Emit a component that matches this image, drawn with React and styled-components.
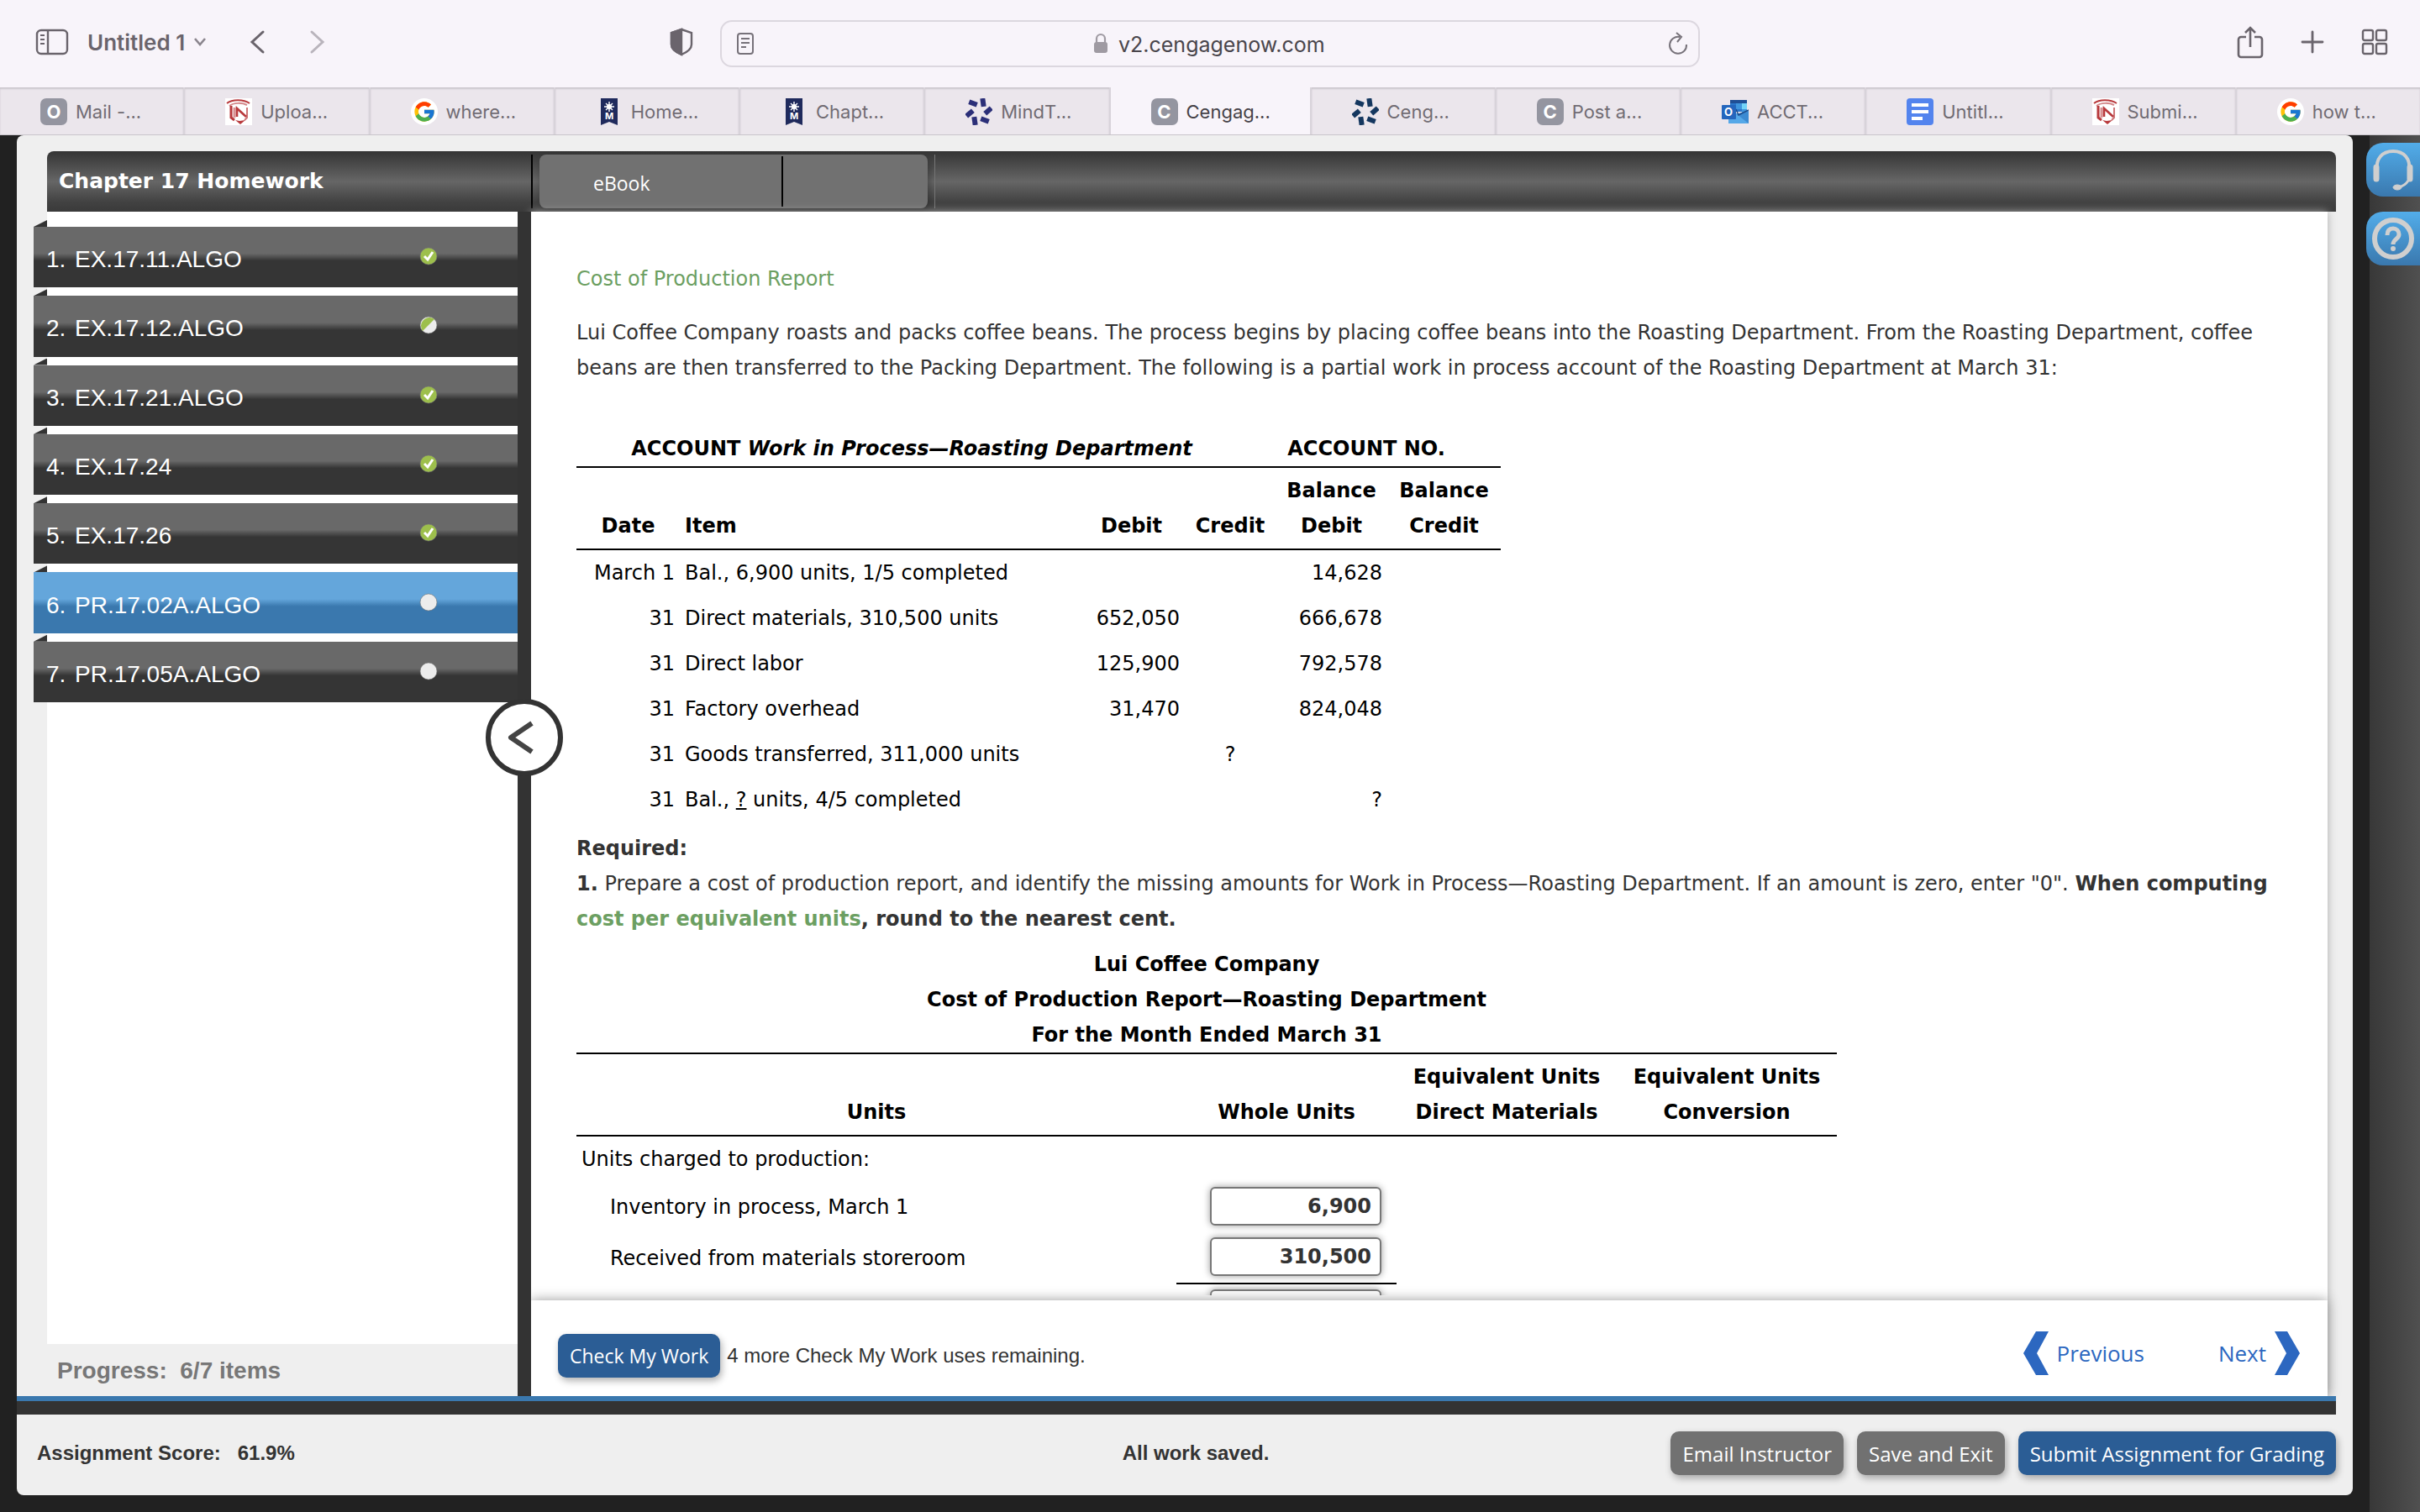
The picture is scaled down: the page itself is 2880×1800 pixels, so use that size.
import React, { useState } from "react";
import styled, { createGlobalStyle } from "styled-components";
import { FcGoogle } from "react-icons/fc";

const verdana = `Verdana, "DejaVu Sans", sans-serif`;
const arial = `Arial, "Liberation Sans", sans-serif`;
const openSans = `"Open Sans", sans-serif`;
const system = `Inter, sans-serif`;

const browserTabs = [
  { icon: "O", text: "Mail -..." },
  { icon: "shield", text: "Uploa..." },
  { icon: "google", text: "where..." },
  { icon: "ribbon", text: "Home..." },
  { icon: "ribbon", text: "Chapt..." },
  { icon: "burst", text: "MindT..." },
  { icon: "C", text: "Cengag...", active: true },
  { icon: "burstTeal", text: "Ceng..." },
  { icon: "C", text: "Post a..." },
  { icon: "outlook", text: "ACCT..." },
  { icon: "docs", text: "Untitl..." },
  { icon: "shield", text: "Submi..." },
  { icon: "google", text: "how t..." },
];

const assignments = [
  { name: "EX.17.11.ALGO", status: "done" },
  { name: "EX.17.12.ALGO", status: "half" },
  { name: "EX.17.21.ALGO", status: "done" },
  { name: "EX.17.24", status: "done" },
  { name: "EX.17.26", status: "done" },
  { name: "PR.17.02A.ALGO", status: "empty" },
  { name: "PR.17.05A.ALGO", status: "empty" },
];

const ledger = [
  { date: "March 1", item: "Bal., 6,900 units, 1/5 completed", balance: "14,628" },
  { date: "31", item: "Direct materials, 310,500 units", debit: "652,050", balance: "666,678" },
  { date: "31", item: "Direct labor", debit: "125,900", balance: "792,578" },
  { date: "31", item: "Factory overhead", debit: "31,470", balance: "824,048" },
  { date: "31", item: "Goods transferred, 311,000 units", credit: "?" },
  { date: "31", item: <>Bal., <u>?</u> units, 4/5 completed</>, balance: "?" },
];

// Six-bladed starburst, each blade is centre x, centre y, width, height, angle
const blades = [
  [21, 5, 6, 10, -8],
  [27, 15, 6, 10, 48],
  [23, 26, 10, 6, 20],
  [11, 27, 6, 10, -8],
  [5, 18, 6, 10, 50],
  [9, 6, 10, 6, 20],
];

function TabIcon({ kind }) {
  if (kind === "O" || kind === "C") return <LetterBadge>{kind}</LetterBadge>;
  if (kind === "google")
    return (
      <GoogleBadge>
        <FcGoogle size={28} />
      </GoogleBadge>
    );
  if (kind === "shield")
    return (
      <svg width="32" height="32" viewBox="0 0 32 32">
        <rect width="32" height="32" fill="#fff" />
        <g fill="none" stroke="#b8393c">
          <path d="M2 6C8 1 22 1 29 6" strokeWidth="2" />
          <path d="M5 9C10 5 20 5 26 8" strokeWidth="2" opacity=".6" />
          <path d="M7 9V23l4 3" strokeWidth="3" />
          <path d="M26 11v12l-3 3" strokeWidth="2" opacity=".7" />
          <path d="M11 11v12" strokeWidth="3" opacity=".55" />
          <path d="M14 22V12l11 10" strokeWidth="2.6" />
        </g>
        <path d="M12 26l5 1 7-1-6 5z" fill="#b8393c" />
      </svg>
    );
  if (kind === "ribbon")
    return (
      <svg width="32" height="32" viewBox="0 0 32 32">
        <path d="M6 0h20v32l-10-4-10 4z" fill="#1f2a5c" />
        <path
          d="M16 4v12M10 10h12M12 6l8 8M20 6l-8 8"
          stroke="#fff"
          strokeWidth="1.4"
        />
        <circle cx="16" cy="10" r="3" fill="#fff" />
        <text x="16" y="25" textAnchor="middle" fontSize="11" fontWeight="700" fontFamily="Inter" fill="#fff">
          M
        </text>
      </svg>
    );
  if (kind === "outlook")
    return (
      <svg width="32" height="32" viewBox="0 0 32 32">
        <path d="M10 2h20v14H10z" fill="#2a76cc" />
        <path d="M10 2h20v4H10z" fill="#1f4f96" />
        <path d="M17 6h7v7h-7z" fill="#3f95dd" />
        <path d="M24 6h6v7h-6z" fill="#73d3f8" />
        <path d="M24 13h6v5h-6z" fill="#3f95dd" />
        <path d="M8 18h12l12-3v15H8z" fill="#55a8e8" />
        <path d="M18 19l14 11V14z" fill="#3b8ad2" />
        <path d="M17 13l3 7 12-6" fill="none" stroke="#1c4a8a" strokeWidth="1.4" />
        <rect y="8" width="17" height="17" rx="1" fill="#2466bd" />
        <text x="8" y="21" textAnchor="middle" fontSize="13" fontWeight="700" fontFamily="Inter" fill="#fff">
          O
        </text>
      </svg>
    );
  if (kind === "docs")
    return (
      <svg width="32" height="32" viewBox="0 0 32 32">
        <rect width="32" height="32" rx="4" fill="#5384ee" />
        <path d="M6 8h20M6 16h20M6 24h13" stroke="#fff" strokeWidth="4" />
      </svg>
    );
  return (
    <svg width="32" height="32" viewBox="0 0 32 32" fill={kind === "burst" ? "#2b2f78" : "#14375f"}>
      {blades.map(([x, y, w, h, a]) => (
        <rect key={a + "-" + x} x={x - w / 2} y={y - h / 2} width={w} height={h} transform={`rotate(${a} ${x} ${y})`} />
      ))}
    </svg>
  );
}

function StatusDot({ status }) {
  return (
    <svg width="22" height="22" viewBox="0 0 22 22">
      <circle cx="11" cy="11" r="10" fill={status === "done" ? "#9dbf4c" : "#ececec"} stroke="#777" strokeOpacity=".6" />
      {status === "half" && <path d="M4 18A10 10 0 0 1 18 4z" fill="#9dbf4c" />}
      {status === "done" && <path d="M6 11l4 4 6-9" fill="none" stroke="#fff" strokeWidth="3" />}
    </svg>
  );
}

function BrowserChrome() {
  return (
    <header>
      <Toolbar>
        <ToolbarGroup>
          <IconButton aria-label="Show sidebar">
            <svg width="40" height="32" viewBox="0 0 40 32" fill="none" stroke="#6a646c" strokeWidth="2.4">
              <rect x="2" y="2" width="36" height="28" rx="5" />
              <path d="M15 2v28" />
              <path d="M6 8h5M6 13h5M6 18h5" strokeWidth="2" />
            </svg>
          </IconButton>
          <GroupButton>
            Untitled 1
            <svg width="16" height="12" viewBox="0 0 16 12" fill="none" stroke="#8a858d" strokeWidth="2.6">
              <path d="M2 2l6 7 6-7" />
            </svg>
          </GroupButton>
          <ArrowButtons>
            <IconButton aria-label="Back">
              <svg width="20" height="32" viewBox="0 0 20 32" fill="none" stroke="#6a646c" strokeWidth="3" strokeLinecap="round">
                <path d="M17 4L4 16l13 12" />
              </svg>
            </IconButton>
            <IconButton aria-label="Forward">
              <svg width="20" height="32" viewBox="0 0 20 32" fill="none" stroke="#b9b4bc" strokeWidth="3" strokeLinecap="round">
                <path d="M3 4l13 12L3 28" />
              </svg>
            </IconButton>
          </ArrowButtons>
          <ShieldButton aria-label="Privacy report">
            <svg width="28" height="34" viewBox="0 0 28 34" fill="none" stroke="#6a646c" strokeWidth="2.4">
              <path d="M14 2l12 4v14c0 5-5 9-12 12C7 29 2 25 2 20V6z" />
              <path d="M14 2v30C7 29 2 25 2 20V6z" fill="#6a646c" />
            </svg>
          </ShieldButton>
        </ToolbarGroup>
        <AddressBar>
          <svg width="20" height="28" viewBox="0 0 20 28" fill="none" stroke="#77727a" strokeWidth="2">
            <rect x="1" y="2" width="18" height="24" rx="3" />
            <path d="M5 8h10M5 13h10M5 18h6" />
          </svg>
          <AddressLabel>
            <svg width="18" height="26" viewBox="0 0 18 26">
              <rect x="1" y="11" width="16" height="13" rx="3" fill="#9f9aa2" />
              <path d="M4 12V7a5 5 0 0 1 10 0v5" fill="none" stroke="#9f9aa2" strokeWidth="2.2" />
            </svg>
            <AddressInput aria-label="Address" defaultValue="v2.cengagenow.com" />
          </AddressLabel>
          <IconButton aria-label="Reload">
            <svg width="24" height="28" viewBox="0 0 24 28" fill="none" stroke="#77727a" strokeWidth="2">
              <path d="M14 6a10 10 0 1 0 8 9" />
              <path d="M10 1l6 5-5 6" />
            </svg>
          </IconButton>
        </AddressBar>
        <ToolbarActions>
          <IconButton aria-label="Share">
            <svg width="32" height="40" viewBox="0 0 32 40" fill="none" stroke="#6a646c" strokeWidth="2.6">
              <path d="M11 14H5a3 3 0 0 0-3 3v18a3 3 0 0 0 3 3h22a3 3 0 0 0 3-3V17a3 3 0 0 0-3-3h-6" />
              <path d="M16 26V4M10 9l6-6 6 6" />
            </svg>
          </IconButton>
          <IconButton aria-label="New tab">
            <svg width="28" height="28" viewBox="0 0 28 28" stroke="#6a646c" strokeWidth="2.8" strokeLinecap="round">
              <path d="M14 2v24M2 14h24" />
            </svg>
          </IconButton>
          <IconButton aria-label="Tab overview">
            <svg width="32" height="32" viewBox="0 0 32 32" fill="none" stroke="#6a646c" strokeWidth="2.4">
              <rect x="2" y="2" width="12" height="12" rx="2" />
              <rect x="18" y="2" width="12" height="12" rx="2" />
              <rect x="2" y="18" width="12" height="12" rx="2" />
              <rect x="18" y="18" width="12" height="12" rx="2" />
            </svg>
          </IconButton>
        </ToolbarActions>
      </Toolbar>
      <TabStrip>
        {browserTabs.map((tab, i) => (
          <BrowserTab key={i} $active={tab.active}>
            <TabIcon kind={tab.icon} />
            {tab.text}
          </BrowserTab>
        ))}
      </TabStrip>
    </header>
  );
}

function Sidebar({ current, onSelect }) {
  return (
    <SidebarBox>
      <AssignmentList>
        {assignments.map((a, i) => (
          <AssignmentLink key={a.name} href="#" $active={i === current} onClick={() => onSelect(i)}>
            <Number>{i + 1}.</Number>
            <Name>{a.name}</Name>
            <StatusDot status={a.status} />
          </AssignmentLink>
        ))}
      </AssignmentList>
      <Progress>Progress:&nbsp; 6/7 items</Progress>
    </SidebarBox>
  );
}

function LedgerTable() {
  return (
    <LedgerGrid>
      <colgroup>
        <col width="123" />
        <col width="474" />
        <col width="127" />
        <col width="108" />
        <col width="133" />
        <col width="135" />
      </colgroup>
      <thead>
        <tr>
          <AccountHead colSpan="4" $trail="34px">
            ACCOUNT <i>Work in Process—Roasting Department</i>
          </AccountHead>
          <AccountHead colSpan="2" $trail="52px">ACCOUNT NO.</AccountHead>
        </tr>
        <tr>
          <Head>Date</Head>
          <Head $align="left">Item</Head>
          <Head>Debit</Head>
          <Head>Credit</Head>
          <Head>Balance<br />Debit</Head>
          <Head>Balance<br />Credit</Head>
        </tr>
      </thead>
      <tbody>
        {ledger.map((row, i) => (
          <tr key={i}>
            <Cell $align="right">{row.date}</Cell>
            <Cell>{row.item}</Cell>
            <Cell $align="right">{row.debit}</Cell>
            <Cell $align="center">{row.credit}</Cell>
            <Cell $align="right">{row.balance}</Cell>
            <Cell />
          </tr>
        ))}
      </tbody>
    </LedgerGrid>
  );
}

function ReportTable() {
  return (
    <ReportGrid>
      <caption>
        Lui Coffee Company
        <br />
        Cost of Production Report—Roasting Department
        <br />
        For the Month Ended March 31
      </caption>
      <colgroup>
        <col width="714" />
        <col width="262" />
        <col width="262" />
        <col width="262" />
      </colgroup>
      <thead>
        <tr>
          <Head $topLine>Units</Head>
          <Head $topLine>Whole Units</Head>
          <Head $topLine>Equivalent Units<br />Direct Materials</Head>
          <Head $topLine>Equivalent Units<br />Conversion</Head>
        </tr>
      </thead>
      <tbody>
        <tr>
          <Cell>Units charged to production:</Cell>
        </tr>
        <tr>
          <Cell $indent>
            <label htmlFor="inventory">Inventory in process, March 1</label>
          </Cell>
          <AmountCell>
            <AmountInput id="inventory" defaultValue="6,900" />
          </AmountCell>
        </tr>
        <tr>
          <Cell $indent>
            <label htmlFor="received">Received from materials storeroom</label>
          </Cell>
          <AmountCell $underline>
            <AmountInput id="received" defaultValue="310,500" />
          </AmountCell>
        </tr>
        <tr>
          <Cell $indent />
          <AmountCell>
            <AmountInput aria-label="Total units charged to production" />
          </AmountCell>
        </tr>
      </tbody>
    </ReportGrid>
  );
}

export default function App() {
  const [current, setCurrent] = useState(5);

  return (
    <>
      <GlobalStyle />
      <Shell>
        <BrowserChrome />
        <Page>
          <Panel>
            <TitleBar>
              <Title>Chapter 17 Homework</Title>
              <TitleTools>
                <ToolTabs>
                  <EBookButton>eBook</EBookButton>
                  <ToolSpacer />
                </ToolTabs>
              </TitleTools>
            </TitleBar>
            <Workspace>
              <Sidebar current={current} onSelect={setCurrent} />
              <Splitter>
                <CollapseButton aria-label="Collapse list">
                  <svg width="32" height="40" viewBox="0 0 32 40" fill="none" stroke="#444" strokeWidth="6">
                    <path d="M30 3L5 20l25 17" strokeLinejoin="round" />
                  </svg>
                </CollapseButton>
              </Splitter>
              <Content>
                <Question>
                  <TopicLink href="#">Cost of Production Report</TopicLink>
                  <Intro>
                    Lui Coffee Company roasts and packs coffee beans. The process begins by placing coffee beans into
                    the Roasting Department. From the Roasting Department, coffee beans are then transferred to the
                    Packing Department. The following is a partial work in process account of the Roasting Department
                    at March 31:
                  </Intro>
                  <LedgerTable />
                  <Required>
                    <b>Required:</b>
                    <br />
                    <b>1.</b> Prepare a cost of production report, and identify the missing amounts for Work in
                    Process—Roasting Department. If an amount is zero, enter "0".{" "}
                    <b>
                      When computing <a href="#">cost per equivalent units</a>, round to the nearest cent.
                    </b>
                  </Required>
                  <ReportTable />
                </Question>
                <ContentFooter>
                  <CheckGroup>
                    <CheckButton $primary>Check My Work</CheckButton>
                    <span>4 more Check My Work uses remaining.</span>
                  </CheckGroup>
                  <PagerNav>
                    <PagerLink href="#">
                      <svg width="30" height="52" viewBox="0 0 30 52" fill="#2c67c0">
                        <path d="M15 0h15L16 26l14 26H15L0 26z" />
                      </svg>
                      Previous
                    </PagerLink>
                    <PagerLink href="#">
                      Next
                      <svg width="30" height="52" viewBox="0 0 30 52" fill="#2c67c0">
                        <path d="M15 0H0l14 26L0 52h15l15-26z" />
                      </svg>
                    </PagerLink>
                  </PagerNav>
                </ContentFooter>
              </Content>
            </Workspace>
            <Baseline />
            <StatusBar>
              <span>Assignment Score:&nbsp;&nbsp; 61.9%</span>
              <SaveState>All work saved.</SaveState>
              <StatusActions>
                <ActionButton>Email Instructor</ActionButton>
                <ActionButton>Save and Exit</ActionButton>
                <ActionButton $primary>Submit Assignment for Grading</ActionButton>
              </StatusActions>
            </StatusBar>
          </Panel>
          <HelpRail>
            <HelpButton aria-label="Support">
              <svg width="50" height="50" viewBox="0 0 50 50" fill="none" stroke="#cfcfcf">
                <path d="M6 26C4 12 12 3 25 3s21 9 19 23" strokeWidth="4" />
                <path d="M5 22v14M45 22v14" strokeWidth="7" strokeLinecap="round" />
                <path d="M43 38c-3 5-7 7-12 8" strokeWidth="3" />
                <ellipse cx="30" cy="46" rx="5" ry="3" fill="#cfcfcf" />
              </svg>
            </HelpButton>
            <HelpButton aria-label="Help">
              <svg width="52" height="52" viewBox="0 0 52 52" fill="none" stroke="#cfcfcf">
                <circle cx="26" cy="26" r="22" strokeWidth="6" />
                <path d="M19 22c0-6 3-8 7-8s7 3 7 7c0 6-7 5-7 12" strokeWidth="5" />
                <circle cx="26" cy="38" r="3" fill="#cfcfcf" stroke="none" />
              </svg>
            </HelpButton>
          </HelpRail>
        </Page>
      </Shell>
    </>
  );
}

const GlobalStyle = createGlobalStyle`
  * {
    box-sizing: border-box;
  }
  body {
    margin: 0;
    background: #212121;
    font-family: ${arial};
  }
  button, input {
    font: inherit;
    margin: 0;
  }
  svg {
    display: block;
    flex: none;
  }
`;

const Shell = styled.div`
  display: flex;
  flex-direction: column;
  height: 100vh;
`;

// ---- browser chrome
const Toolbar = styled.div`
  display: grid;
  grid-template-columns: 1fr minmax(400px, 1166px) 1fr;
  align-items: center;
  height: 104px;
  background: #f8f4fa;
`;

const ToolbarGroup = styled.div`
  display: flex;
  align-items: center;
  padding: 0 32px 4px 42px;
`;

const IconButton = styled.button`
  display: flex;
  padding: 0;
  border: 0;
  background: none;
`;

const GroupButton = styled(IconButton)`
  align-items: center;
  gap: 10px;
  margin-left: 22px;
  font-family: ${system};
  font-size: 26px;
  font-weight: 600;
  color: #6a646c;
`;

const ArrowButtons = styled.div`
  display: flex;
  gap: 52px;
  margin-left: 50px;
`;

const ShieldButton = styled(IconButton)`
  margin-left: auto;
`;

const AddressBar = styled.div`
  display: flex;
  align-items: center;
  justify-content: space-between;
  height: 56px;
  padding: 0 12px 0 18px;
  border: 2px solid #dcd7df;
  border-radius: 14px;
`;

const AddressLabel = styled.label`
  display: flex;
  align-items: center;
  gap: 12px;
`;

const AddressInput = styled.input`
  width: 250px;
  padding: 2px 0 0;
  border: 0;
  outline: 0;
  background: none;
  font-family: ${system};
  font-size: 25px;
  color: #4a464c;
`;

const ToolbarActions = styled.div`
  display: flex;
  align-items: center;
  justify-content: flex-end;
  gap: 44px;
  padding: 0 38px 4px 0;
`;

const TabStrip = styled.nav`
  display: flex;
  height: 57px;
  border-bottom: 1px solid #c9c5cb;
`;

const BrowserTab = styled.button`
  display: flex;
  align-items: center;
  gap: 10px;
  flex: ${(p) => (p.$active ? "0 0 239px" : "1 1 0")};
  min-width: 0;
  padding: 2px 0 0 48px;
  border: 0;
  border-right: 2px solid #d8d3da;
  background: ${(p) => (p.$active ? "#f8f4fa" : "#ebe6ec")};
  box-shadow: ${(p) => (p.$active ? "none" : "inset 0 2px 2px #cbc6cd")};
  font-family: ${system};
  font-size: 22px;
  white-space: nowrap;
  color: ${(p) => (p.$active ? "#454147" : "#716c73")};
  &:last-child {
    border-right: 0;
  }
`;

const LetterBadge = styled.span`
  display: flex;
  align-items: center;
  justify-content: center;
  width: 32px;
  height: 32px;
  border-radius: 7px;
  background: #9495a0;
  font-size: 22px;
  font-weight: 700;
  color: #fff;
`;

const GoogleBadge = styled.span`
  display: flex;
  align-items: center;
  justify-content: center;
  width: 32px;
  height: 32px;
  border-radius: 50%;
  background: #fff;
`;

// ---- page frame
const Page = styled.main`
  display: flex;
  flex: 1;
  min-height: 0;
  padding-left: 20px;
  background: linear-gradient(to left, #505050, #383838 60px, #212121 60px);
`;

const Panel = styled.div`
  display: flex;
  flex-direction: column;
  flex: 1;
  min-width: 0;
  margin-bottom: 20px;
  padding-top: 19px;
  border-radius: 8px;
  background: #efefef;
`;

const TitleBar = styled.div`
  display: flex;
  flex: none;
  height: 72px;
  margin: 0 20px 0 36px;
  border-radius: 8px 8px 0 0;
  background: linear-gradient(#343434, #666 50%, #424242 84%, #3a3a3a);
`;

const Title = styled.h1`
  width: 576px;
  margin: 0;
  padding-left: 14px;
  font: bold 25px/72px ${verdana};
  color: #fff;
`;

const TitleTools = styled.div`
  display: flex;
  align-self: center;
  height: 64px;
  padding: 0 8px;
  border-left: 2px solid #000;
  border-right: 1px solid #777;
`;

const ToolTabs = styled.div`
  display: flex;
  align-items: center;
  border-radius: 8px;
  background: #717171;
  box-shadow: 2px 6px 10px rgba(0, 0, 0, 0.3);
`;

const EBookButton = styled.button`
  width: 290px;
  height: 60px;
  padding: 4px 0 0 64px;
  border: 0;
  border-right: 2px solid #000;
  background: none;
  font-family: ${openSans};
  font-size: 23px;
  text-align: left;
  color: #fff;
`;

const ToolSpacer = styled.div`
  width: 172px;
`;

const Workspace = styled.div`
  display: flex;
  flex: 1;
  min-height: 0;
  margin: 0 30px 0 20px;
`;

// ---- assignment list
const SidebarBox = styled.aside`
  display: flex;
  flex-direction: column;
  flex: none;
  width: 576px;
  background: linear-gradient(to right, #efefef 16px, #fff 16px);
`;

const AssignmentList = styled.nav`
  display: grid;
  grid-auto-rows: 1fr;
  gap: 10px;
  height: 566px;
  margin-top: 18px;
`;

const AssignmentLink = styled.a`
  position: relative;
  display: flex;
  align-items: center;
  padding: 0 95px 0 15px;
  background: ${(p) =>
    p.$active
      ? "linear-gradient(#64a6db 44%, #3a78ae 56%)"
      : "linear-gradient(#696969 44%, #353535 56%)"};
  font-size: 28px;
  color: #fff;
  text-decoration: none;
  svg {
    margin-bottom: 2px;
  }
  &::before {
    content: "";
    position: absolute;
    left: 0;
    bottom: 100%;
    width: 16px;
    height: 8px;
    background: #333;
    clip-path: polygon(0 100%, 100% 0, 100% 100%);
  }
`;

const Number = styled.span`
  width: 34px;
  padding-top: 6px;
`;

const Name = styled.span`
  flex: 1;
  padding-top: 6px;
`;

const Progress = styled.div`
  margin-top: auto;
  padding: 2px 28px 0;
  background: linear-gradient(#efefef, #efefef);
  font-size: 28px;
  font-weight: 700;
  line-height: 60px;
  color: #777;
`;

const Splitter = styled.div`
  position: relative;
  flex: none;
  width: 16px;
  background: #333;
`;

const CollapseButton = styled.button`
  position: absolute;
  z-index: 2;
  top: 580px;
  left: 50%;
  display: flex;
  align-items: center;
  justify-content: center;
  width: 92px;
  height: 92px;
  margin-left: -46px;
  padding: 0 10px 0 0;
  border: 6px solid #333;
  border-radius: 50%;
  background: #fff;
`;

// ---- question
const Content = styled.section`
  display: flex;
  flex-direction: column;
  flex: 1;
  min-width: 0;
  background: #fff;
  box-shadow: 0 0 10px #aaa;
`;

const Question = styled.div`
  flex: 1;
  min-height: 0;
  margin-bottom: 6px;
  padding: 59px 40px 0 54px;
  overflow: hidden;
  font-family: ${verdana};
  font-size: 24px;
  line-height: 42px;
  color: #333;
`;

const TopicLink = styled.a`
  display: block;
  color: #6c9f62;
  text-decoration: none;
`;

const Intro = styled.p`
  margin: 22px 0 54px;
`;

const Required = styled.p`
  margin: 10px 0 12px;
  a {
    color: #6c9f62;
    text-decoration: none;
  }
`;

const LedgerGrid = styled.table`
  width: 1100px;
  table-layout: fixed;
  border-spacing: 0;
  color: #000;
`;

const ReportGrid = styled(LedgerGrid)`
  width: 1500px;
  caption {
    font-weight: 700;
  }
`;

const AccountHead = styled.th`
  padding: 0 ${(p) => p.$trail} 0 0;
  border-bottom: 2px solid #000;
`;

const Head = styled.th`
  padding: 6px;
  border-top: ${(p) => (p.$topLine ? "2px solid #000" : "0")};
  border-bottom: 2px solid #000;
  text-align: ${(p) => p.$align || "center"};
  vertical-align: bottom;
`;

const Cell = styled.td`
  padding: 6px 6px 6px ${(p) => (p.$indent ? "40px" : "6px")};
  text-align: ${(p) => p.$align || "left"};
`;

const AmountCell = styled.td`
  padding: 6px 18px 8px 0;
  border-bottom: ${(p) => (p.$underline ? "2px solid #000" : "0")};
`;

const AmountInput = styled.input`
  display: block;
  width: 204px;
  height: 46px;
  margin-left: auto;
  padding: 0 10px;
  border: 2px solid #777;
  border-radius: 6px;
  box-shadow: 0 0 8px rgba(0, 0, 0, 0.4);
  font-weight: 700;
  text-align: right;
  color: #333;
`;

const ContentFooter = styled.footer`
  display: flex;
  align-items: center;
  justify-content: space-between;
  flex: none;
  height: 114px;
  padding: 12px 33px 0 32px;
  background: #fff;
  box-shadow: 0 0 14px #999;
  font-size: 24px;
  color: #333;
`;

const CheckGroup = styled.div`
  display: flex;
  align-items: center;
  gap: 8px;
  padding-top: 6px;
`;

const ActionButton = styled.button`
  height: 52px;
  padding: 0 14px;
  border: 0;
  border-radius: 10px;
  background: ${(p) => (p.$primary ? "#2b5d95" : "#717171")};
  box-shadow: 2px 4px 8px rgba(0, 0, 0, 0.3);
  font-family: ${openSans};
  font-size: 24px;
  font-weight: 400;
  white-space: nowrap;
  color: #fff;
`;

const CheckButton = styled(ActionButton)`
  font-size: 23px;
`;

const PagerNav = styled.nav`
  display: flex;
  gap: 88px;
`;

const PagerLink = styled.a`
  display: flex;
  align-items: center;
  gap: 10px;
  font-family: ${openSans};
  font-size: 26px;
  color: #2c67c0;
  text-decoration: none;
`;

// ---- bottom bar
const Baseline = styled.div`
  flex: none;
  height: 22px;
  margin-right: 20px;
  border-top: 6px solid #3a78ae;
  background: #333;
`;

const StatusBar = styled.footer`
  display: grid;
  grid-template-columns: 1fr auto 1fr;
  align-items: center;
  flex: none;
  height: 96px;
  padding: 0 20px 4px 24px;
  font-size: 24px;
  font-weight: 700;
  color: #333;
`;

const SaveState = styled.span`
  padding-left: 22px;
`;

const StatusActions = styled.div`
  display: flex;
  justify-content: flex-end;
  gap: 16px;
`;

// ---- right rail
const HelpRail = styled.aside`
  display: flex;
  flex-direction: column;
  gap: 18px;
  padding: 9px 0 0 16px;
`;

const HelpButton = styled.button`
  display: flex;
  align-items: center;
  justify-content: center;
  width: 64px;
  height: 64px;
  padding: 0;
  border: 0;
  border-radius: 20px 0 0 20px;
  background: linear-gradient(#52adea, #3a78ae);
`;
